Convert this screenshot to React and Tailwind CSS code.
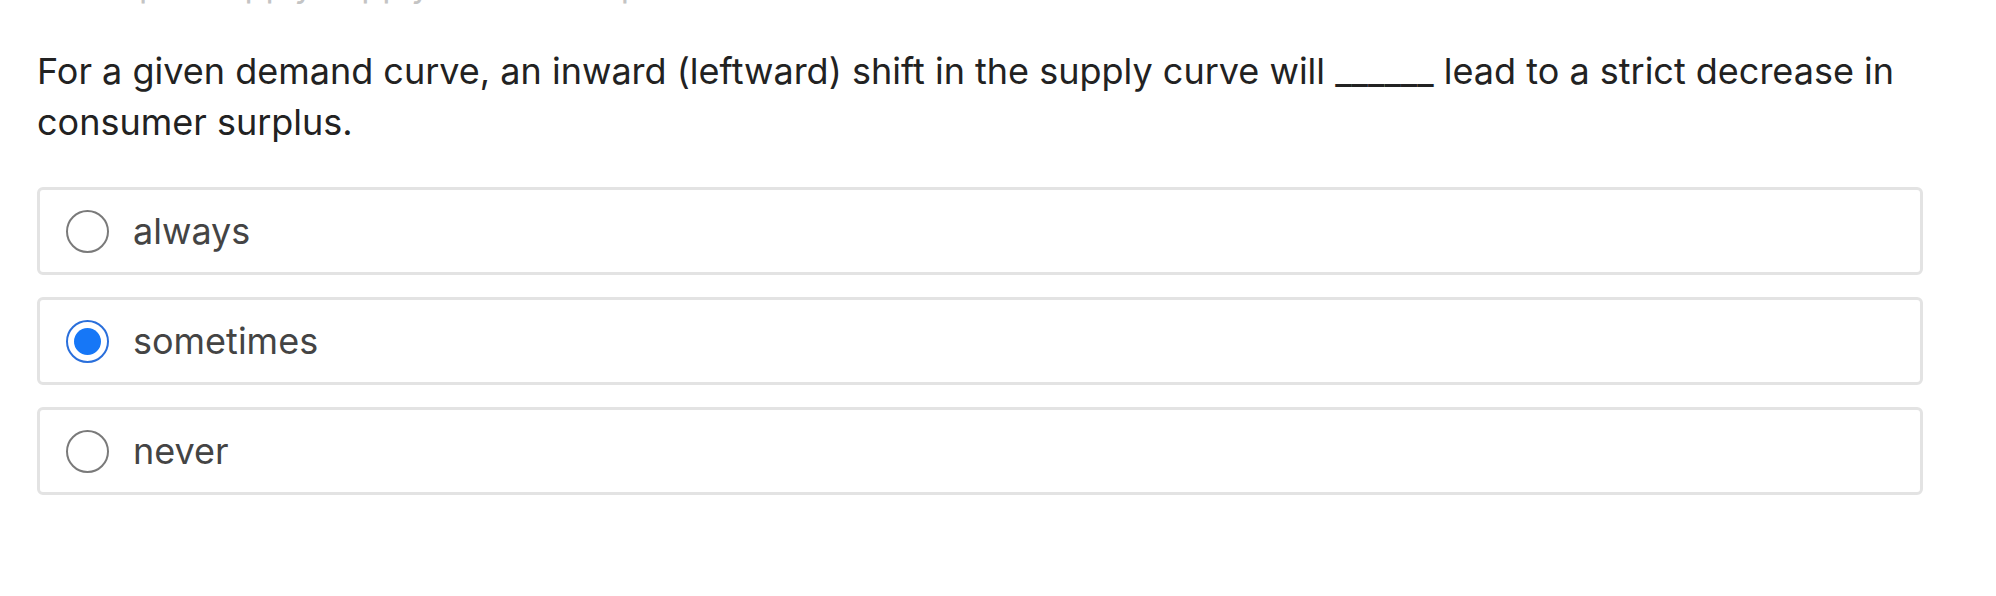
import { useState } from 'react';

const OPTIONS = ['always', 'sometimes', 'never'];

function Radio({ checked }) {
  return (
    <span
      className={
        'flex h-[43px] w-[43px] shrink-0 items-center justify-center rounded-full border-2 bg-white ' +
        (checked ? 'border-[#2a6fdb]' : 'border-[#7a7a7a]')
      }
    >
      {checked && <span className="h-[27px] w-[27px] rounded-full bg-[#1677f7]" />}
    </span>
  );
}

export default function App() {
  const [picked, setPicked] = useState('sometimes');

  return (
    <div
      className="min-h-screen bg-white px-[37px] text-[#222]"
      style={{ fontFamily: 'Inter, "Noto Sans", sans-serif' }}
    >
      <div className="mt-[-36px] h-[41px] overflow-hidden text-[34px] leading-[41px] text-[#c4c4c4]">
        Quick pick: apply supply rules to surplus
      </div>

      <p className="mt-[41px] w-[1886px] text-[36px] leading-[51px] text-[#222]">
        For a given demand curve, an inward (leftward) shift in the supply curve will ______ lead to a strict
        decrease in consumer surplus.
      </p>

      <div className="mt-[39px] flex w-[1886px] flex-col gap-[22px]">
        {OPTIONS.map((opt) => (
          <label
            key={opt}
            onClick={() => setPicked(opt)}
            className="flex h-[88px] cursor-pointer items-center gap-[24px] rounded-[6px] border-[3px] border-[#e3e3e3] pl-[26px]"
          >
            <Radio checked={picked === opt} />
            <span className="text-[36px] leading-none text-[#444]">{opt}</span>
          </label>
        ))}
      </div>
    </div>
  );
}
